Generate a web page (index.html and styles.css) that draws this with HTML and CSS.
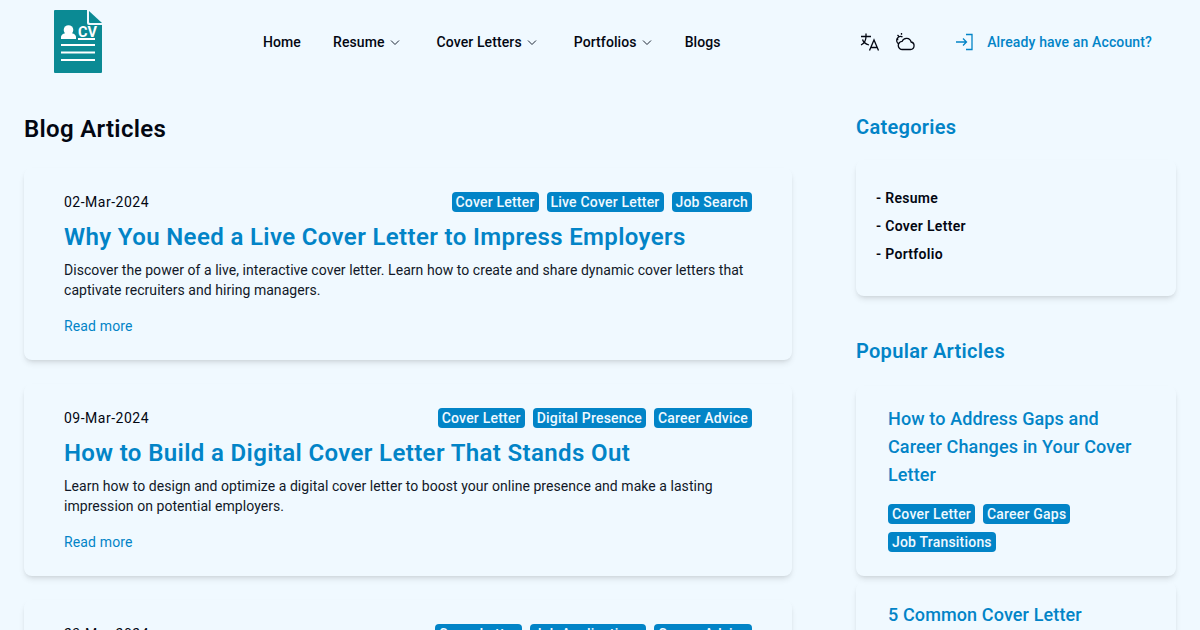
FILE: index.html
```html
<!DOCTYPE html>
<html lang="en">
<head>
  <meta charset="UTF-8" />
  <meta name="viewport" content="width=device-width, initial-scale=1.0" />
  <title>Blog Articles</title>
  <link rel="stylesheet" href="styles.css">
</head>
<body>
<div class="page">
  <header class="topbar">
    <svg class="logo" viewBox="0 0 48 64" aria-hidden="true">
      <path fill="#0b8a94" d="M1 0h32v13a2 2 0 0 0 2 2h13v47a1 1 0 0 1-1 1H1a1 1 0 0 1-1-1V1a1 1 0 0 1 1-1z"/>
      <path fill="#0b8a94" d="M35 1l13 12H36a1 1 0 0 1-1-1z"/>
      <circle cx="14.500" cy="20" r="4.800" fill="#fff"/>
      <path fill="#fff" d="M7 29v-2c0-2.500 3-3.500 4.500-4h6c1.500 .5 4.500 1.500 4.500 4v2z"/>
      <text x="24" y="26.500" class="logo-text">CV</text>
      <path stroke="#fff" stroke-width="2" fill="none" d="M24 29h17M7 35h34M7 42.500h34M7 50h34"/>
    </svg>
    <nav class="nav">
      <a>Home</a>
      <a class="has-menu">Resume <svg viewBox="0 0 12 12"><path d="M2 4.500l4 4 4-4"/></svg></a>
      <a class="has-menu">Cover Letters <svg viewBox="0 0 12 12"><path d="M2 4.500l4 4 4-4"/></svg></a>
      <a>Portfolios <svg viewBox="0 0 12 12"><path d="M2 4.500l4 4 4-4"/></svg></a>
      <a>Blogs</a>
    </nav>
    <div class="tools">
      <svg class="tool" viewBox="0 0 20 20"><path d="M1 4.500h10M6 1.500v3c0 4-2 7-5 8.500M2.500 7.500c.8 2.500 3 4.500 6.500 5.500M9.500 18.500L14 8l4.500 10.500M11 15.500h6"/></svg>
      <svg class="tool" viewBox="0 0 20 20"><path d="M6.500 17.500h8a3.800 3.800 0 0 0 .6-7.500 4.700 4.700 0 0 0-9-.6 4 4 0 0 0 .4 8.100z"/><path d="M3 12a4 4 0 0 1 3.500-7.200M5.500 1v1.800M1.500 3l1.200 1.200M0.500 7.500h1.800"/></svg>
      <a class="login">
        <svg viewBox="0 0 18 18"><path d="M1 9h10.500M8 5.500L11.500 9 8 12.500M11 1.500h6v15h-6"/></svg>
        Already have an Account?
      </a>
    </div>
  </header>

  <div class="content">
    <main class="articles">
      <h1 class="page-title">Blog Articles</h1>

      <article class="card post">
        <div class="post-meta">
          <span class="date">02-Mar-2024</span>
          <div class="tags"><span class="tag">Cover Letter</span><span class="tag">Live Cover Letter</span><span class="tag">Job Search</span></div>
        </div>
        <h2 class="post-title">Why You Need a Live Cover Letter to Impress Employers</h2>
        <p class="excerpt">Discover the power of a live, interactive cover letter. Learn how to create and share dynamic cover letters that captivate recruiters and hiring managers.</p>
        <a class="read-more">Read more</a>
      </article>

      <article class="card post">
        <div class="post-meta">
          <span class="date">09-Mar-2024</span>
          <div class="tags"><span class="tag">Cover Letter</span><span class="tag">Digital Presence</span><span class="tag">Career Advice</span></div>
        </div>
        <h2 class="post-title">How to Build a Digital Cover Letter That Stands Out</h2>
        <p class="excerpt">Learn how to design and optimize a digital cover letter to boost your online presence and make a lasting impression on potential employers.</p>
        <a class="read-more">Read more</a>
      </article>

      <article class="card post">
        <div class="post-meta">
          <span class="date">23-Mar-2024</span>
          <div class="tags"><span class="tag">Cover Letter</span><span class="tag">Job Applications</span><span class="tag">Career Advice</span></div>
        </div>
      </article>
    </main>

    <aside class="sidebar">
      <h2 class="side-title">Categories</h2>
      <div class="card categories">
        <a>- Resume</a>
        <a>- Cover Letter</a>
        <a>- Portfolio</a>
      </div>

      <h2 class="side-title popular">Popular Articles</h2>
      <div class="card popular-card">
        <h3 class="popular-title">How to Address Gaps and Career Changes in Your Cover Letter</h3>
        <div class="tags side-tags"><span class="tag">Cover Letter</span><span class="tag">Career Gaps</span><span class="tag">Job Transitions</span></div>
      </div>
      <div class="card popular-card">
        <h3 class="popular-title">5 Common Cover Letter Mistakes to Avoid</h3>
      </div>
    </aside>
  </div>
</div>
</body>
</html>
```

FILE: styles.css
```css
* {
  margin: 0;
  padding: 0;
  box-sizing: border-box;
}
body {
  font-family: Roboto, sans-serif;
  letter-spacing: 0.3px;
  background-color: #f0f9ff;
  color: #030712;
}
.page {
  height: 630px;
  overflow: hidden;
}
.topbar {
  display: flex;
  align-items: center;
  height: 84px;
  padding: 0 48px 0 54px;
}
.logo {
  width: 48px;
  height: 64px;
}
.logo-text {
  font-size: 14.500px;
  font-weight: 700;
  fill: #fff;
  letter-spacing: 0;
}
.nav {
  display: flex;
  align-items: center;
  gap: 32px;
  margin-left: 161px;
  font-size: 14px;
  font-weight: 500;
  letter-spacing: 0.1px;
}
.nav a {
  display: flex;
  align-items: center;
  gap: 4px;
}
.nav .has-menu {
  margin-right: 4px;
}
.nav svg {
  width: 12px;
  height: 12px;
  fill: none;
  stroke: #1f2937;
}
.tools {
  display: flex;
  align-items: center;
  margin-left: auto;
}
.tool {
  width: 20px;
  height: 20px;
  margin-right: 16px;
  fill: none;
  stroke: #030712;
  stroke-width: 1.300;
}
.login {
  display: flex;
  align-items: center;
  gap: 14px;
  margin-left: 23px;
  font-size: 14px;
  font-weight: 500;
  letter-spacing: 0.13px;
  color: #0284c7;
}
.login svg {
  width: 18px;
  height: 18px;
  fill: none;
  stroke: #0284c7;
  stroke-width: 1.300;
}
.content {
  display: flex;
  gap: 64px;
  padding: 0 24px;
}
.articles {
  width: 768px;
}
.sidebar {
  width: 320px;
}
.page-title {
  font-size: 24px;
  font-weight: 600;
  line-height: 32px;
  margin: 29px 0 23px;
}
.card {
  border-radius: 8px;
  box-shadow: 0 4px 6px -1px rgba(0,0,0,0.1), 0 2px 4px -2px rgba(0,0,0,0.1);
}
.post {
  height: 192px;
  padding: 24px 40px;
  margin-bottom: 24px;
}
.post-meta {
  display: flex;
  justify-content: space-between;
  align-items: center;
}
.date {
  font-size: 14px;
  letter-spacing: 0.5px;
}
.tags {
  display: flex;
  flex-wrap: wrap;
  gap: 8px;
}
.tag {
  background-color: #0284c7;
  color: #f0f9ff;
  font-size: 14px;
  font-weight: 500;
  line-height: 20px;
  letter-spacing: 0.2px;
  padding: 0 4px;
  border-radius: 4px;
}
.post-title {
  font-size: 24px;
  font-weight: 600;
  line-height: 32px;
  letter-spacing: 0.37px;
  color: #0284c7;
  margin-top: 9px;
}
.excerpt {
  font-size: 14px;
  line-height: 20px;
  letter-spacing: 0.05px;
  margin-top: 7px;
  color: #111827;
}
.read-more {
  display: block;
  font-size: 14px;
  line-height: 20px;
  letter-spacing: 0.15px;
  margin-top: 16px;
  color: #0284c7;
}
.side-title {
  font-size: 20px;
  font-weight: 600;
  line-height: 28px;
  color: #0284c7;
  margin: 29px 0 19px;
}
.side-title.popular {
  margin: 41px 0 21px;
}
.categories {
  display: flex;
  flex-direction: column;
  height: 136px;
  padding: 24px 20px;
  font-size: 14px;
  font-weight: 600;
  line-height: 28px;
}
.popular-card {
  padding: 19px 32px 24px;
  margin-bottom: 6px;
}
.popular-title {
  font-size: 18px;
  font-weight: 500;
  line-height: 28px;
  letter-spacing: 0.12px;
  color: #0284c7;
}
.side-tags {
  margin-top: 15px;
}
```
